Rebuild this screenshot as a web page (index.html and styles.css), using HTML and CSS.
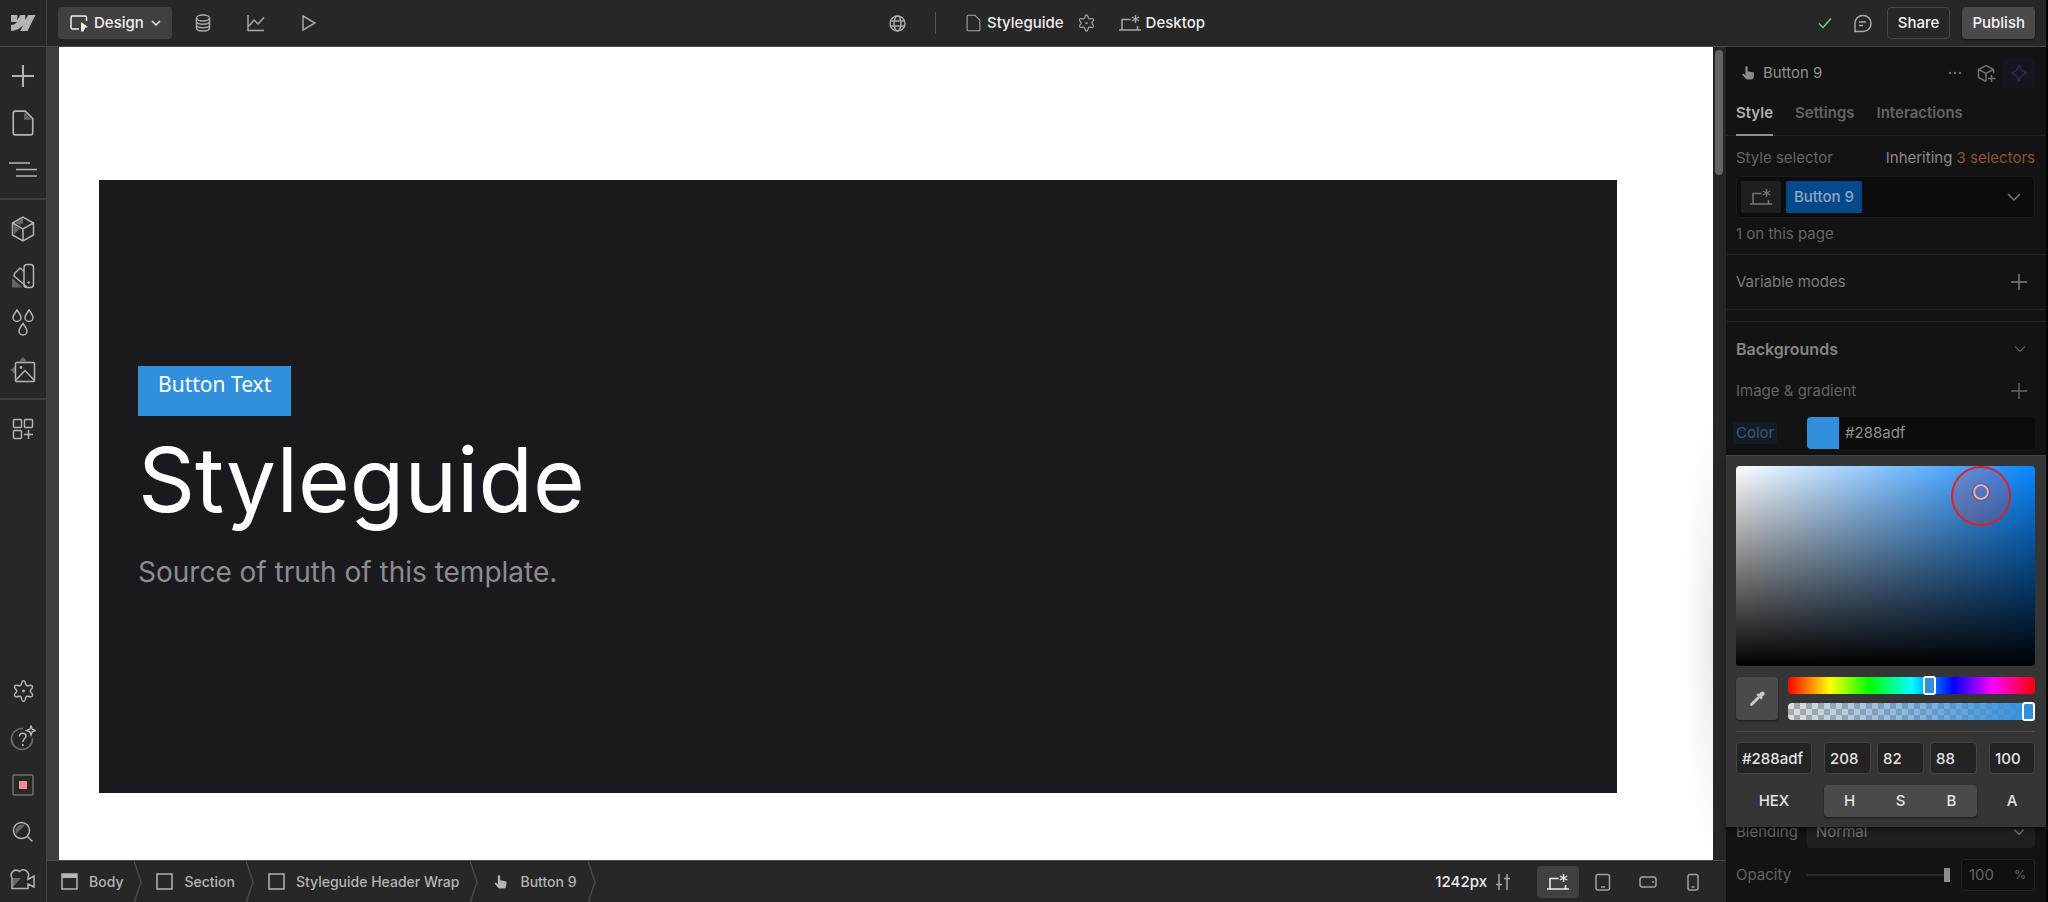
FILE: index.html
```html
<!DOCTYPE html>
<html lang="en">
<head>
<meta charset="utf-8">
<title>Styleguide – Designer</title>
<link rel="stylesheet" href="styles.css">
</head>
<body>
<svg class="sprite" aria-hidden="true">
  <symbol id="i-page" viewBox="0 0 24 24"><path d="M3 2.500a2 2 0 0 1 1.500-1.500H14l7 7v13.500a1.500 1.500 0 0 1-1.500 1.500h-15A1.500 1.500 0 0 1 3 21.500z"/></symbol>
  <symbol id="i-gear" viewBox="0 0 24 24"><path d="M9.500 5.500C10 3 10.500 1.200 12 1.200S14 3 14.500 5.500c.4.900 1 1.200 2 1 2.400-.8 4-.9 4.800.4s-.2 2.400-1.900 4.100c-.6.700-.6 1.300 0 2 1.700 1.700 2.700 2.800 1.900 4.100s-2.400 1.200-4.800.4c-1-.2-1.600.1-2 1-.5 2.500-1 4.300-2.500 4.300S10 21 9.500 18.500c-.4-.9-1-1.200-2-1-2.400.8-4 .9-4.800-.4s.2-2.400 1.900-4.100c.6-.7.6-1.300 0-2-1.700-1.700-2.700-2.800-1.900-4.100s2.400-1.200 4.800-.4c1 .2 1.600-.1 2-1z"/><circle class="solid" cx="12" cy="12" r="1.500"/></symbol>
  <symbol id="i-laptop" viewBox="0 0 22 16"><path d="M0 15h22M3 15V4.500h8.500M18.500 15v-4"/><path class="star" d="M16.500 0v8M12.800 2l7.400 4M20.200 2l-7.400 4"/></symbol>
  <symbol id="i-chevron" viewBox="0 0 12 12"><path d="m2 4 4 4 4-4"/></symbol>
  <symbol id="i-plus" viewBox="0 0 16 16"><path d="M8 0v16M0 8h16"/></symbol>
  <symbol id="i-box" viewBox="0 0 17 17"><path d="M1 1h15v15H1z"/></symbol>
  <symbol id="i-hand" viewBox="0 0 14 16"><path class="solid" d="M4 1.500c0-1.600 2.600-1.600 2.600 0V6l6 1.200c.9.200 1.400.8 1.300 1.700l-.5 4c-.3 1.600-1.200 2.600-3 2.600H6.500c-1.200 0-1.900-.5-2.600-1.400L.6 10.400C0 9.200 1.300 8.300 2.300 9.100L4 10.500z"/></symbol>
  <symbol id="i-cube" viewBox="0 0 24 26"><path class="shade" d="m4 7 8-5v5l-3 2zM3 9l6 4-6 5z"/><path d="M12 1.200 22.500 7v12L12 24.800 1.500 19V7zM1.500 7 12 13l10.500-6M12 13v11.800"/></symbol>
</svg>

<header class="topbar">
  <a class="logo" href="#" aria-label="Home"><svg width="26" height="18" viewBox="0 0 26 18"><path class="solid" d="M25.500 1 17.500 17h-7.300l3.200-6.300C10.800 14 7 16.500 1 17v-6.200c3 0 5-1.600 6-2.900H1V1h6.400v5.200L10.300 1h5v5.100L18.200 1z"/></svg></a>
  <nav class="topbar-left">
    <button class="mode"><svg width="18" height="17" viewBox="0 0 18 17"><path d="M16.500 6V2.500a1.500 1.500 0 0 0-1.500-1.500H2.500A1.500 1.500 0 0 0 1 2.500v10A1.500 1.500 0 0 0 2.500 14H9"/><path class="solid" d="m11 7 7 5-3 1-1.500 3.500H11z"/></svg><span>Design</span><svg width="12" height="12"><use href="#i-chevron"/></svg></button>
    <button class="icon-btn" aria-label="CMS"><svg width="16" height="18" viewBox="0 0 16 18"><ellipse cx="8" cy="4" rx="6.500" ry="3"/><path d="M1.500 4v10c0 4 13 4 13 0V4M1.500 7.500c0 3.500 13 3.500 13 0M1.500 11c0 3.500 13 3.500 13 0"/></svg></button>
    <button class="icon-btn" aria-label="Insights"><svg width="18" height="18" viewBox="0 0 18 18"><path d="M1 1v15.500h16M2 12l5-6 4 4 6-6.500"/></svg></button>
    <button class="icon-btn" aria-label="Preview"><svg width="14" height="16" viewBox="0 0 14 16"><path d="m1 1 12 7-12 7z"/></svg></button>
  </nav>
  <div class="topbar-center">
    <button class="icon-btn globe" aria-label="Locale"><svg width="17" height="17" viewBox="0 0 17 17"><circle cx="8.500" cy="8.500" r="7.500"/><ellipse cx="8.500" cy="8.500" rx="3.500" ry="7.500"/><path d="M1.500 6h14M1.500 11h14"/></svg></button>
    <span class="rule"></span>
    <button class="title-btn page-btn"><svg width="17" height="18"><use href="#i-page"/></svg><span>Styleguide</span></button>
    <button class="icon-btn page-gear" aria-label="Page settings"><svg width="19" height="18"><use href="#i-gear"/></svg></button>
    <button class="title-btn"><svg width="22" height="16"><use href="#i-laptop"/></svg><span>Desktop</span></button>
  </div>
  <div class="topbar-right">
    <svg class="saved" width="14" height="12" viewBox="0 0 14 12"><path d="m1 6.500 4 4L13 1.500"/></svg>
    <button class="icon-btn" aria-label="Comments"><svg width="20" height="19" viewBox="0 0 20 19"><path d="M2 17.500V9.500C2 4.500 5.500 1.500 10 1.500s8 3.300 8 8-3.500 8-8 8zM6 8h7M6 11.500h4"/></svg></button>
    <button class="btn btn-outline">Share</button>
    <button class="btn btn-fill">Publish</button>
  </div>
</header>

<aside class="sidebar">
  <button aria-label="Add"><svg width="22" height="22"><use href="#i-plus"/></svg></button>
  <button aria-label="Pages"><svg width="26" height="26" viewBox="0 0 24 24"><path class="shade" d="M13 2v7h7z"/><use href="#i-page"/></svg></button>
  <button aria-label="Navigator"><svg width="28" height="17" viewBox="0 0 28 17"><path d="M0 2h21M7 8.500h21M7 15h21"/></svg></button>
  <hr>
  <button aria-label="Components"><svg width="24" height="26"><use href="#i-cube"/></svg></button>
  <button aria-label="Variables"><svg width="24" height="26" viewBox="0 0 24 26"><path class="shade" d="M1 15v9.500h10.500z"/><rect x="13" y="1.500" width="9.500" height="23" rx="3"/><path d="M13 8.500 9 5 3.500 10.500 3 13l13 11"/><circle class="solid" cx="17.700" cy="19.500" r="1.200"/></svg></button>
  <button aria-label="Style selectors"><svg width="22" height="27" viewBox="0 0 22 27"><path d="M5 1c2.500 3.500 4 5.500 4 7.500a4 4 0 0 1-8 0C1 6.500 2.500 4.500 5 1zM17 1c2.500 3.500 4 5.500 4 7.500a4 4 0 0 1-8 0c0-2 1.500-4 4-7.500zM11 14.500c2.500 3.500 4 5.500 4 7.500a4 4 0 0 1-8 0c0-2 1.500-4 4-7.500z"/></svg></button>
  <button aria-label="Assets"><svg width="26" height="26" viewBox="0 0 26 26"><path class="shade" d="M9 4.500 13 0l4 4.500zM5 9l-4.500 4L5 17z"/><rect x="5.500" y="5.500" width="19" height="19" rx="1"/><path d="m6 23 9-9.500 9 9.500"/><circle class="solid" cx="11" cy="10.500" r="1.400"/></svg></button>
  <hr>
  <button aria-label="Apps"><svg width="22" height="22" viewBox="0 0 22 22"><rect x="1.500" y="1.500" width="8" height="8" rx="1"/><rect x="12.500" y="1.500" width="8" height="8" rx="1"/><rect x="1.500" y="12.500" width="8" height="8" rx="1"/><path d="M16.500 12v9M12 16.500h9"/></svg></button>
  <span class="grow"></span>
  <button aria-label="Settings"><svg width="23" height="24"><use href="#i-gear"/></svg></button>
  <button aria-label="Help"><svg width="26" height="26" viewBox="0 0 26 26"><path class="faint" d="M13 3.500a10.500 10.500 0 1 0 9.500 10"/><path d="M9.500 11.500c0-4.500 6.500-4 6.500-.5 0 3-3.200 2.500-3.200 6M12.800 19v2M21 1l1.200 3.200L25.500 5.500l-3.300 1.300L21 10l-1.200-3.200-3.300-1.300 3.300-1.300z"/></svg></button>
  <button aria-label="Record"><svg width="22" height="22" viewBox="0 0 22 22"><rect class="faint" x="1" y="1" width="20" height="20" rx="1"/><path class="pink" d="M7 7h8v8H7z"/></svg></button>
  <button aria-label="Search"><svg width="22" height="22" viewBox="0 0 22 22"><path class="shade" d="M4 13C2 7 7 2 13 4z"/><circle cx="9.500" cy="9.500" r="8"/><path d="m15.500 15.500 5 5"/></svg></button>
  <button aria-label="Video"><svg width="26" height="22" viewBox="0 0 26 22"><path class="shade" d="M3 10h8l-8 9z"/><path d="M2 20.500V10C-1 4.500 5 0 9.500 3.500 14-.5 20.500 4 18 9.500v2l6-3.500v11l-6-3v4.500z"/></svg></button>
</aside>

<main class="canvas">
  <div class="page">
    <section class="hero">
      <a class="hero-btn" href="#">Button Text</a>
      <h1>Styleguide</h1>
      <p>Source of truth of this template.</p>
    </section>
  </div>
  <div class="scroll"><span class="scroll-thumb"></span></div>
</main>

<footer class="bottombar">
  <nav class="crumbs">
    <a href="#"><svg width="17" height="17"><path class="solid" d="M1 1h15v4H1z"/><use href="#i-box"/></svg>Body<svg class="sep" width="8" height="42" viewBox="0 0 8 42"><path d="m0 0 7 21-7 21"/></svg></a>
    <a href="#"><svg width="17" height="17"><use href="#i-box"/></svg>Section<svg class="sep" width="8" height="42" viewBox="0 0 8 42"><path d="m0 0 7 21-7 21"/></svg></a>
    <a href="#"><svg width="17" height="17"><use href="#i-box"/></svg>Styleguide Header Wrap<svg class="sep" width="8" height="42" viewBox="0 0 8 42"><path d="m0 0 7 21-7 21"/></svg></a>
    <a href="#"><svg width="17" height="14"><use href="#i-hand"/></svg>Button 9<svg class="sep" width="8" height="42" viewBox="0 0 8 42"><path d="m0 0 7 21-7 21"/></svg></a>
  </nav>
  <div class="devices">
    <button class="width-btn"><span>1242px</span><svg width="16" height="18" viewBox="0 0 16 18"><path d="M4 1v16M1 11.500h6M12 1v16M9 5.500h6"/></svg></button>
    <button class="device active" aria-label="Desktop"><svg width="22" height="16"><use href="#i-laptop"/></svg></button>
    <button class="device" aria-label="Tablet"><svg width="16" height="18" viewBox="0 0 16 18"><rect x="1" y="1.500" width="13.500" height="15.500" rx="2"/><path d="M6 14h4"/></svg></button>
    <button class="device" aria-label="Landscape"><svg width="18" height="12" viewBox="0 0 18 12"><rect x="1" y="1" width="16" height="10" rx="2.500"/><path d="M14 5v2"/></svg></button>
    <button class="device" aria-label="Phone"><svg width="12" height="18" viewBox="0 0 12 18"><rect x="1" y="1.500" width="10" height="15.500" rx="2"/><path d="M4.500 14h3"/></svg></button>
  </div>
</footer>

<aside class="panel">
  <div class="panel-head">
    <svg width="14" height="14"><use href="#i-hand"/></svg>
    <span class="name">Button 9</span>
    <button aria-label="More"><svg width="14" height="4" viewBox="0 0 14 4"><circle class="solid" cx="2" cy="2" r="1.200"/><circle class="solid" cx="7" cy="2" r="1.200"/><circle class="solid" cx="12" cy="2" r="1.200"/></svg></button>
    <button aria-label="Create component"><svg width="20" height="19" viewBox="0 0 20 19"><path d="M9 17.500 1.500 13.500V5.500L9 1.500l7.500 4V9M1.500 5.500 9 9.500l7.500-4M9 9.500v8M14.500 11v7M11 14.500h7.500"/></svg></button>
    <button class="ai" aria-label="Assistant"><svg width="18" height="18" viewBox="0 0 18 18"><path d="M9 1q1.500 6.500 8 8-6.500 1.500-8 8-1.500-6.500-8-8 6.500-1.500 8-8z"/></svg></button>
  </div>
  <div class="tabs" role="tablist">
    <button role="tab" class="on" aria-selected="true">Style</button>
    <button role="tab">Settings</button>
    <button role="tab">Interactions</button>
  </div>
  <section class="selector">
    <div class="between"><span>Style selector</span><span class="inherit">Inheriting <a href="#">3 selectors</a></span></div>
    <div class="selector-box">
      <button class="state" aria-label="Breakpoint"><svg width="22" height="16"><use href="#i-laptop"/></svg></button>
      <button class="chip">Button 9</button>
      <button class="open" aria-label="Open"><svg width="18" height="18"><use href="#i-chevron"/></svg></button>
    </div>
    <span>1 on this page</span>
  </section>
  <section class="modes between"><span>Variable modes</span><button aria-label="Add mode"><svg width="16" height="16"><use href="#i-plus"/></svg></button></section>
  <section class="backgrounds">
    <div class="between head"><h2>Backgrounds</h2><button aria-label="Collapse"><svg width="14" height="14"><use href="#i-chevron"/></svg></button></div>
    <div class="between"><span>Image &amp; gradient</span><button aria-label="Add image"><svg width="16" height="16"><use href="#i-plus"/></svg></button></div>
    <div class="color-row">
      <label for="color">Color</label>
      <div class="color-field"><button class="swatch" aria-label="Pick color"></button><input id="color" value="#288adf"></div>
    </div>
    <div class="picker">
      <div class="sv"><span class="cursor"></span></div>
      <div class="sliders">
        <button class="dropper" aria-label="Eyedropper"><svg width="16" height="16" viewBox="0 0 16 16"><path class="solid" d="M10 3c2-3 4-3 5-2s1 3-2 5l.8 1-1.600 1.600L7.400 3.800 9 2.200z"/><path class="thick" d="m9 7-6.500 6.500"/></svg></button>
        <input class="hue" type="range" min="0" max="360" value="208" aria-label="Hue">
        <input class="alpha" type="range" min="0" max="100" value="100" aria-label="Alpha">
      </div>
      <div class="values">
        <input id="hex" value="#288adf"><input id="h" value="208"><input id="s" value="82"><input id="b" value="88"><input id="a" value="100">
        <label for="hex">HEX</label>
        <div class="hsb"><label for="h">H</label><label for="s">S</label><label for="b">B</label></div>
        <label for="a">A</label>
      </div>
    </div>
  </section>
  <div class="row blending">
    <label for="blend">Blending</label>
    <div class="select"><select id="blend"><option>Normal</option></select><svg width="14" height="14"><use href="#i-chevron"/></svg></div>
  </div>
  <div class="row opacity">
    <label for="opacity">Opacity</label>
    <input id="opacity" type="range" value="100">
    <div class="percent"><input value="100" aria-label="Opacity percent"><span>%</span></div>
  </div>
</aside>
</body>
</html>
```
FILE: styles.css
```css
*, ::before { box-sizing: border-box; }

body {
  margin: 0;
  min-height: 100vh;
  padding-right: 2px;
  display: grid;
  grid-template: "top top top" 47px "side canvas panel" 1fr "side bottom panel" 42px / 47px 1fr 320px;
  background: #000;
  color: #b4b4b4;
  font: 15px/20px Inter, sans-serif;
}

button, input, select { font: inherit; color: inherit; margin: 0; }
button { display: flex; align-items: center; justify-content: center; padding: 0; border: 0; background: none; }
input, select { border: 0; background: none; outline: 0; min-width: 0; width: 100%; }
a { color: inherit; text-decoration: none; }

svg { display: block; flex: none; fill: none; stroke: currentColor; stroke-width: 1.5; }
.sprite { position: absolute; width: 0; height: 0; }
.solid { fill: currentColor; stroke: none; }
.shade { fill: #666; stroke: none; }
.faint { stroke: #707070; }
.pink { fill: #f08c9c; stroke: none; }
.star { stroke-width: 1.3; }
.thick { stroke-width: 3; stroke-linecap: round; }

.topbar {
  grid-area: top;
  display: flex;
  align-items: center;
  background: #272727;
  border-bottom: 1px solid #4a4a4a;
  padding-right: 11px;
}
.logo { width: 47px; align-self: stretch; display: grid; place-items: center; border-right: 1px solid #404040; }
.topbar-left, .topbar-right { flex: 1; display: flex; align-items: center; }
.topbar-left { margin-left: 11px; }
.topbar-right { justify-content: flex-end; gap: 12px; }
.mode {
  gap: 6px;
  height: 32px;
  padding: 0 10px 0 12px;
  margin-right: 5px;
  border-radius: 4px;
  background: #404040;
  color: #f0f0f0;
  font-weight: 500;
}
.icon-btn { width: 53px; height: 32px; color: #a8a8a8; }
.topbar-center { display: flex; align-items: center; }
.globe { width: 18px; }
.rule { width: 1px; height: 22px; margin: 0 29px; background: #555; }
.title-btn { gap: 5px; color: #eee; font-weight: 500; }
.title-btn svg { color: #a8a8a8; }
.page-gear { width: 46px; margin-right: 9px; }
.saved { color: #63d489; }
.topbar-right .icon-btn { width: 38px; margin-right: -7px; }
.btn { height: 32px; padding: 0 10px; border-radius: 4px; color: #f5f5f5; font-weight: 500; }
.btn-outline { border: 1px solid #454545; }
.btn-fill { background: #4a4a4a; box-shadow: 0 1px 2px #111; }

.sidebar {
  grid-area: side;
  display: flex;
  flex-direction: column;
  align-items: center;
  padding-top: 5px;
  background: #272727;
  border-right: 1px solid #404040;
}
.sidebar button { width: 100%; height: 47px; }
.sidebar hr { width: 100%; height: 2px; margin: 5px 0; border: 0; background: #404040; }
.grow { flex: 1; }

.canvas { grid-area: canvas; display: flex; padding-left: 12px; background: #3c3c3c; }
.page {
  flex: 1;
  display: flex;
  padding: 133px 96px 67px 40px;
  background: radial-gradient(30px 50% at 100% 50%, #eaeaea, #fff) right bottom / 30px 55% no-repeat #fff;
}
.hero {
  flex: 1;
  display: flex;
  flex-direction: column;
  align-items: flex-start;
  justify-content: center;
  padding: 0 39px 18px;
  background: #1a1a1e;
}
.hero-btn {
  height: 50px;
  padding: 5px 20px;
  background: #328fdc;
  color: #fff;
  font: 21px/26px "Noto Sans", sans-serif;
}
.hero h1 { margin: 16px 0 26px; color: #fff; font-size: 89px; line-height: 96px; font-weight: 400; }
.hero p { margin: 0; color: #8c8c8e; font-size: 28px; line-height: 36px; }
.scroll { width: 13px; padding: 3px 3px 0 2px; background: #262626; }
.scroll-thumb { display: block; height: 125px; border-radius: 4px; background: #646464; }

.bottombar {
  grid-area: bottom;
  display: flex;
  justify-content: space-between;
  background: #272727;
  border-top: 1px solid #4a4a4a;
  overflow: hidden;
}
.crumbs, .crumbs a, .devices { display: flex; align-items: center; }
.crumbs { font-size: 14px; font-weight: 500; }
.crumbs a { gap: 11px; padding-left: 14px; }
.crumbs .sep { color: #4a4a4a; }
.devices { gap: 3px; padding-right: 12px; }
.width-btn { gap: 8px; margin-right: 23px; color: #a8a8a8; }
.width-btn span { color: #eee; font-weight: 500; }
.device { width: 42px; height: 32px; border-radius: 4px; color: #a0a0a0; }
.device.active { background: #404040; color: #eee; }

.panel {
  grid-area: panel;
  display: flex;
  flex-direction: column;
  background: #131313;
  color: #646464;
}
.between { display: flex; align-items: center; justify-content: space-between; }
.panel-head { display: flex; align-items: center; height: 40px; margin-top: 6px; padding: 0 11px 0 15px; color: #8a8a8a; }
.panel-head .name { flex: 1; padding-left: 8px; color: #8f8f8f; }
.panel-head button { width: 32px; height: 30px; color: #707070; }
.panel-head .ai { background: #16151f; color: #2c2a4a; border-radius: 3px; }
.tabs { display: flex; gap: 22px; padding: 4px 10px 0; border-bottom: 1px solid #222; height: 43px; font-weight: 600; }
.tabs button { height: 39px; border-bottom: 2px solid transparent; padding-bottom: 5px; }
.tabs .on { color: #b0b0b0; border-color: #8e8e8e; }
.selector { display: flex; flex-direction: column; padding: 12px 11px 10px 10px; border-bottom: 1px solid #222; }
.inherit { color: #8a8a8a; }
.inherit a { color: #8a5330; }
.selector-box { display: flex; gap: 5px; height: 42px; margin: 8px 0 6px; padding: 4px; border: 1px solid #1b1b1b; border-radius: 4px; background: #0c0c0c; }
.selector-box button { border-radius: 2px; }
.state { width: 40px; background: #1e1e1e; color: #777; }
.chip { padding: 0 8px; background: #05498b; color: #8ea6bf; font-weight: 500; }
.open { margin-left: auto; padding-right: 7px; color: #777; }
.open svg, .head svg { stroke-width: 1; }
.modes { height: 55px; padding: 0 19px 0 10px; border-bottom: 1px solid #222; color: #7c7c7c; }
.backgrounds { margin-top: 11px; border-top: 1px solid #222; }
.backgrounds .between { height: 32px; padding: 0 19px 0 10px; }
.backgrounds .head { height: 53px; }
.backgrounds h2 { margin: 0; font-size: 16px; font-weight: 600; color: #858585; }
.color-row { display: flex; align-items: center; justify-content: space-between; padding: 10px 11px 6px 7px; }
.color-row label { padding: 1px 3px; border-radius: 2px; background: #121b28; color: #42576e; }
.color-field { display: flex; width: 228px; height: 32px; border-radius: 4px; background: #0c0c0c; overflow: hidden; }
.color-field input { padding: 0 6px; color: #8f8f8f; }
.swatch { flex: none; width: 32px; background: #328fdc; }

.picker { position: relative; z-index: 1; padding: 10px 11px 10px 10px; background: #353535; border-top: 1px solid #444; color: #e4e4e4; font-weight: 500; box-shadow: 0 2px 4px #0008; }
.sv {
  position: relative;
  height: 200px;
  border-radius: 4px;
  background: linear-gradient(transparent, #000), linear-gradient(to right, #fff, #0a86ff);
}
.cursor { position: absolute; left: 82%; top: 13%; width: 16px; height: 16px; margin: -8px; border: 2px solid #e8d0e4; border-radius: 50%; outline: 1px solid #5a5060; }
.cursor::before { content: ""; position: absolute; left: -24px; top: -20px; width: 60px; height: 60px; border: 2px solid #d8232c; border-radius: 50%; background: #e0303c33; }
.sliders { display: grid; grid-template-columns: 42px 1fr; column-gap: 10px; row-gap: 9px; margin-top: 11px; padding-bottom: 11px; border-bottom: 1px solid #504844; }
.dropper { grid-row: span 2; height: 43px; border-radius: 4px; background: #4a4a4a; color: #c8c8c8; box-shadow: 0 1px 2px #1a1a1a; }
.hue, .alpha { appearance: none; height: 17px; border-radius: 4px; }
.hue { background: linear-gradient(to right, #f00, #ff0 17%, #0f0 33%, #0ff 50%, #00f 67%, #f0f 83%, #f00); }
.alpha { background: linear-gradient(to right, transparent, #328fdc), repeating-conic-gradient(#aaa 0 25%, #ddd 0 50%) 0 0 / 12px 12px; }
.hue::-webkit-slider-thumb, .alpha::-webkit-slider-thumb { appearance: none; width: 13px; height: 19px; border: 2px solid #fff; border-radius: 3px; background: #328fdc; }
.values { display: grid; grid-template-columns: 82px repeat(3, 47px) 1fr; gap: 11px 6px; margin-top: 10px; text-align: center; }
.values input { height: 32px; padding: 0 5px; border: 1px solid #454545; border-radius: 4px; background: #232323; }
#hex { width: 76px; }
.values > label, .hsb label { line-height: 32px; }
.values > label[for="hex"] { padding-right: 6px; }
#a, .values > label[for="a"] { justify-self: end; width: 46px; }
.hsb { grid-column: span 3; display: grid; grid-template-columns: repeat(3, 1fr); border-radius: 4px; background: #4a4a4a; box-shadow: 0 1px 2px #1a1a1a; }

.row { display: flex; align-items: center; padding: 0 11px 0 10px; }
.row label { flex: none; width: 71px; }
.blending { margin-top: -11px; }
.select { flex: 1; display: flex; align-items: center; height: 32px; padding: 0 9px; border-radius: 4px; background: #1e1e1e; }
.select select { appearance: none; color: #707070; }
.opacity { margin-top: 11px; }
#opacity { appearance: none; flex: 1; height: 16px; background: linear-gradient(#2a2a2a, #2a2a2a) center / 100% 2px no-repeat; }
#opacity::-webkit-slider-thumb { appearance: none; width: 6px; height: 14px; background: #8c8c8c; }
.percent { display: flex; align-items: center; width: 74px; height: 32px; margin-left: 11px; padding: 0 8px 0 5px; border: 1px solid #222; border-radius: 3px; background: #101010; }
.percent span { font-size: 12px; }
```
